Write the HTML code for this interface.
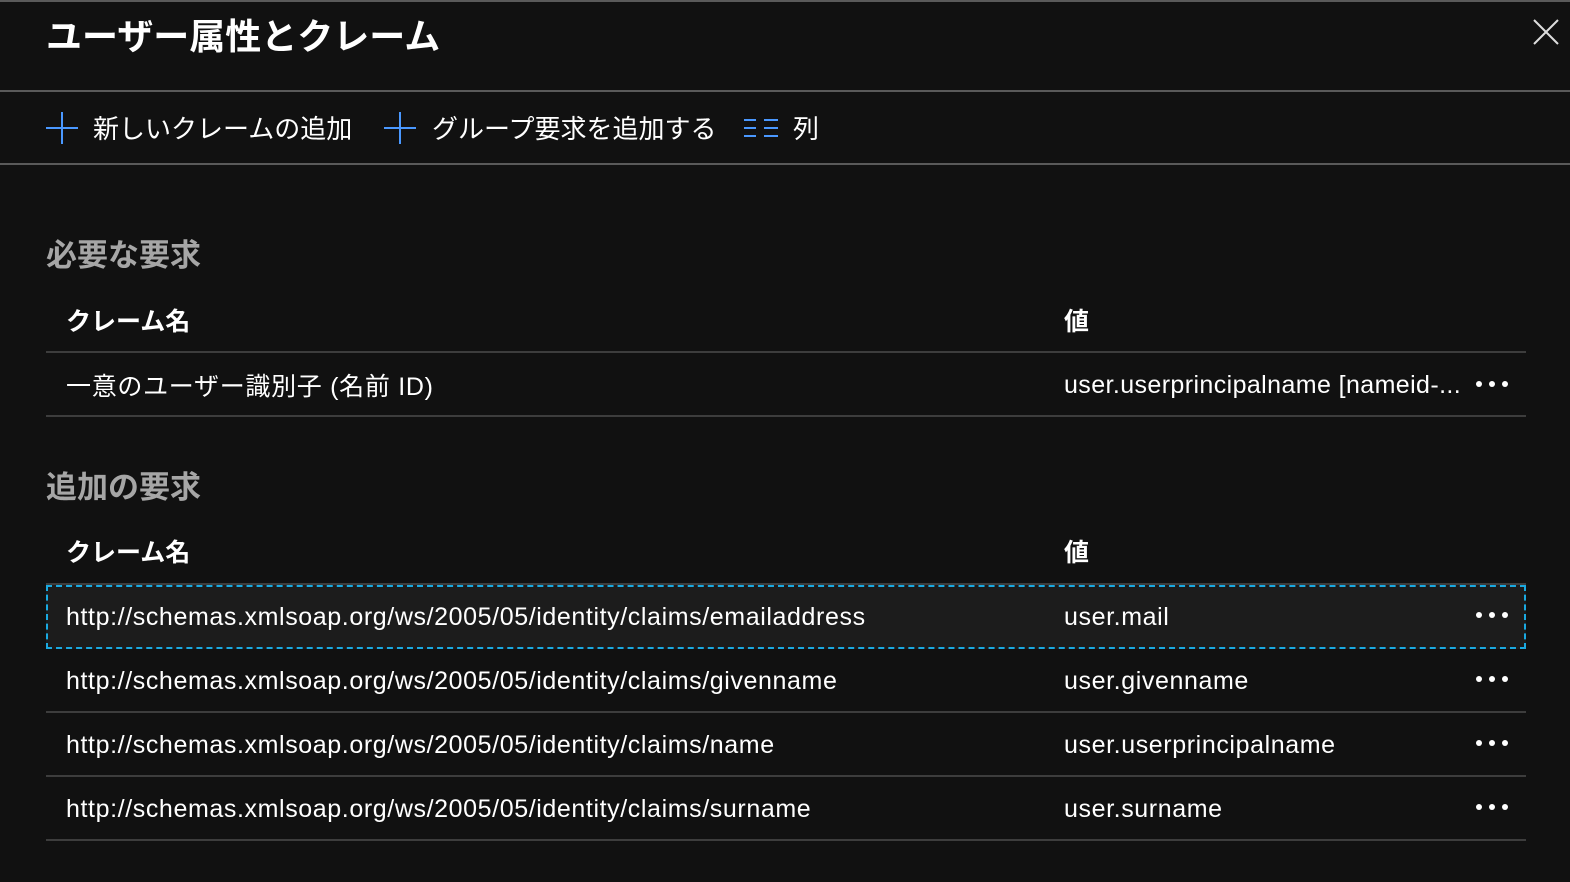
<!DOCTYPE html>
<html><head><meta charset="utf-8"><style>
body{margin:0;width:1570px;height:882px;background:#111;color:#fff;font-family:"Liberation Sans","Noto Sans CJK JP",sans-serif;position:relative;overflow:hidden}
.a{position:absolute;white-space:nowrap}
.line{position:absolute;height:2px;background:#3d3d3d}
.t{font-size:25px;letter-spacing:0.6px}
</style></head><body>
<div class="line" style="left:0;top:0;width:1570px;background:#5a5a5a"></div>
<div class="a" style="left:46px;top:8px;font-size:36px;font-weight:bold">ユーザー属性とクレーム</div>
<svg class="a" style="left:1532px;top:18px" width="28" height="28"><path d="M2 2L26 26M26 2L2 26" stroke="#ddd" stroke-width="2"/></svg>
<div class="line" style="left:0;top:90px;width:1570px;background:#5a5a5a"></div>
<svg class="a" style="left:46px;top:112px" width="32" height="32"><path d="M16 0V32M0 16H32" stroke="#4a98ff" stroke-width="2"/></svg>
<div class="a" style="left:93px;top:109px;font-size:26px">新しいクレームの追加</div>
<svg class="a" style="left:384px;top:112px" width="32" height="32"><path d="M16 0V32M0 16H32" stroke="#4a98ff" stroke-width="2"/></svg>
<div class="a" style="left:432px;top:109px;font-size:26px">グループ要求を追加する</div>
<svg class="a" style="left:744px;top:117px" width="34" height="22"><path d="M0 3H12M0 11H12M0 19H12M20 3H34M20 11H34M20 19H34" stroke="#4a98ff" stroke-width="2"/></svg>
<div class="a" style="left:793px;top:109px;font-size:26px">列</div>
<div class="line" style="left:0;top:163px;width:1570px;background:#5a5a5a"></div>

<div class="a" style="left:46px;top:230px;font-size:31px;font-weight:bold;color:#a6a6a6">必要な要求</div>
<div class="a" style="left:66px;top:302px;font-size:25px;font-weight:bold">クレーム名</div>
<div class="a" style="left:1064px;top:302px;font-size:25px;font-weight:bold">値</div>
<div class="line" style="left:46px;top:351px;width:1480px"></div>
<div class="a" style="left:66px;top:367px;font-size:25px;letter-spacing:0.7px">一意のユーザー識別子 (名前 ID)</div>
<div class="a" style="left:1064px;top:371px;font-size:25px;letter-spacing:0.4px">user.userprincipalname [nameid-...</div>
<svg class="a" style="left:1472px;top:378px" width="40" height="12"><circle cx="7" cy="6" r="3" fill="#fff"/><circle cx="20" cy="6" r="3" fill="#fff"/><circle cx="33" cy="6" r="3" fill="#fff"/></svg>
<div class="line" style="left:46px;top:415px;width:1480px"></div>

<div class="a" style="left:46px;top:462px;font-size:31px;font-weight:bold;color:#a6a6a6">追加の要求</div>
<div class="a" style="left:66px;top:533px;font-size:25px;font-weight:bold">クレーム名</div>
<div class="a" style="left:1064px;top:533px;font-size:25px;font-weight:bold">値</div>
<div class="line" style="left:46px;top:583px;width:1480px"></div>
<div class="a" style="left:46px;top:585px;width:1476px;height:60px;background:#1c1c1c;border:2px dashed #1aa9e0"></div>
<div class="a t" style="left:66px;top:603px">http://schemas.xmlsoap.org/ws/2005/05/identity/claims/emailaddress</div>
<div class="a t" style="left:1064px;top:603px">user.mail</div>
<svg class="a" style="left:1472px;top:609px" width="40" height="12"><circle cx="7" cy="6" r="3" fill="#fff"/><circle cx="20" cy="6" r="3" fill="#fff"/><circle cx="33" cy="6" r="3" fill="#fff"/></svg>
<div class="a t" style="left:66px;top:667px">http://schemas.xmlsoap.org/ws/2005/05/identity/claims/givenname</div>
<div class="a t" style="left:1064px;top:667px">user.givenname</div>
<svg class="a" style="left:1472px;top:673px" width="40" height="12"><circle cx="7" cy="6" r="3" fill="#fff"/><circle cx="20" cy="6" r="3" fill="#fff"/><circle cx="33" cy="6" r="3" fill="#fff"/></svg>
<div class="line" style="left:46px;top:711px;width:1480px"></div>
<div class="a t" style="left:66px;top:731px">http://schemas.xmlsoap.org/ws/2005/05/identity/claims/name</div>
<div class="a t" style="left:1064px;top:731px">user.userprincipalname</div>
<svg class="a" style="left:1472px;top:737px" width="40" height="12"><circle cx="7" cy="6" r="3" fill="#fff"/><circle cx="20" cy="6" r="3" fill="#fff"/><circle cx="33" cy="6" r="3" fill="#fff"/></svg>
<div class="line" style="left:46px;top:775px;width:1480px"></div>
<div class="a t" style="left:66px;top:795px">http://schemas.xmlsoap.org/ws/2005/05/identity/claims/surname</div>
<div class="a t" style="left:1064px;top:795px">user.surname</div>
<svg class="a" style="left:1472px;top:801px" width="40" height="12"><circle cx="7" cy="6" r="3" fill="#fff"/><circle cx="20" cy="6" r="3" fill="#fff"/><circle cx="33" cy="6" r="3" fill="#fff"/></svg>
<div class="line" style="left:46px;top:839px;width:1480px"></div>
</body></html>
